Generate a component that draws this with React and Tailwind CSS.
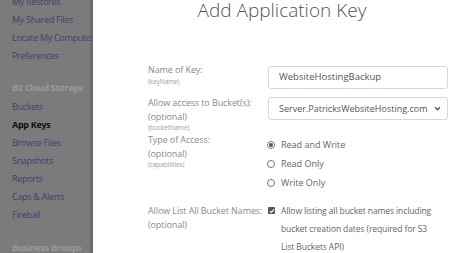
import React from "react";

const font = { fontFamily: '"Open Sans", "Liberation Sans", sans-serif' };

function Sidebar() {
  const base = "text-[9px] tracking-[-0.3px] leading-[18px] whitespace-nowrap";
  const link = base + " text-[#3e4270]";
  const head = base + " text-[#9a9a9a] font-bold";
  return (
    <div className="w-[93px] shrink-0 bg-[#7b7b7b] overflow-hidden relative">
      <div className="pl-[12px] -mt-[7px] flex flex-col">
        <div className={link}>My Restores</div>
        <div className={link}>My Shared Files</div>
        <div className={link}>Locate My Computer</div>
        <div className={link}>Preferences</div>
        <div className={head + " mt-[14px]"}>B2 Cloud Storage</div>
        <div className={link + " mt-[1px]"}>Buckets</div>
        <div className={base + " text-[#111] font-bold"}>App Keys</div>
        <div className={link}>Browse Files</div>
        <div className={link}>Snapshots</div>
        <div className={link}>Reports</div>
        <div className={link}>Caps &amp; Alerts</div>
        <div className={link}>Fireball</div>
        <div className={head + " mt-[15px]"}>Business Groups</div>
      </div>
      <div className="absolute right-0 top-0 bottom-0 w-[4px] bg-gradient-to-r from-transparent to-[#626262]" />
    </div>
  );
}

function Label({ title, lines, sub }) {
  return (
    <div className="w-[120px] shrink-0 text-[#8a8a8a] text-[9px] leading-[13.5px] whitespace-nowrap tracking-[-0.1px]">
      <div>{title}</div>
      {lines && lines.map((l) => <div key={l}>{l}</div>)}
      {sub && <div className="text-[6.5px] leading-[9px] text-[#a0a0a0]">{sub}</div>}
    </div>
  );
}

function Radio({ checked, label }) {
  return (
    <div className="flex items-center h-[19px] gap-[6px]">
      <span className="w-[8px] h-[8px] -ml-[1px] rounded-full border border-[#777] flex items-center justify-center bg-white">
        {checked && <span className="w-[4px] h-[4px] rounded-full bg-[#555]" />}
      </span>
      <span className="text-[#666] text-[9px]">{label}</span>
    </div>
  );
}

export default function App() {
  return (
    <div className="w-[474px] h-[253px] flex overflow-hidden bg-white" style={font}>
      <Sidebar />
      <div className="flex-1 flex flex-col bg-white">
        <div className="text-center text-[19px] font-light text-[#555] leading-[24px] -mt-[2px] pr-[3px]">
          Add Application Key
        </div>
        <div className="mt-[17px] ml-[12px] mr-[11px] h-px bg-[#e6e6e6]" />
        <div className="pl-[55px] pt-[24px] flex flex-col">
          <div className="flex h-[33px]">
            <Label title="Name of Key:" sub="(keyName)" />
            <div className="w-[180px] h-[23px] mt-[3px] border border-[#d8d8d8] rounded-[3px] flex items-center pl-[10px] text-[#555] text-[9.5px]">
              WebsiteHostingBackup
            </div>
          </div>
          <div className="flex h-[37px]">
            <Label title="Allow access to Bucket(s):" lines={["(optional)"]} sub="(bucketName)" />
            <div className="w-[180px] h-[23px] mt-[1px] border border-[#d8d8d8] rounded-[3px] flex items-center pl-[10px] pr-[6px] text-[#555] text-[9px] justify-between">
              <span className="whitespace-nowrap">Server.PatricksWebsiteHosting.com</span>
              <svg width="7" height="5" viewBox="0 0 8 6"><path d="M1 1.5 L4 4.5 L7 1.5" stroke="#555" strokeWidth="1.6" fill="none" /></svg>
            </div>
          </div>
          <div className="flex h-[71px]">
            <Label title="Type of Access:" lines={["(optional)"]} sub="(capabilities)" />
            <div className="flex flex-col mt-[2px]">
              <Radio checked label="Read and Write" />
              <Radio label="Read Only" />
              <Radio label="Write Only" />
            </div>
          </div>
          <div className="flex">
            <Label title="Allow List All Bucket Names:" lines={["(optional)"]} />
            <div className="flex gap-[6px] -mt-[2px]">
              <span className="w-[7px] h-[7px] mt-[5px] shrink-0 rounded-[1px] bg-[#555] flex items-center justify-center">
                <svg width="6" height="6" viewBox="0 0 7 7"><path d="M1.2 3.6 L2.9 5.2 L5.9 1.6" stroke="white" strokeWidth="1.4" fill="none" /></svg>
              </span>
              <span className="text-[#666] text-[8.5px] tracking-[-0.1px] leading-[18px] w-[157px]">
                Allow listing all bucket names including bucket creation dates (required for S3 List Buckets API)
              </span>
            </div>
          </div>
        </div>
      </div>
    </div>
  );
}
